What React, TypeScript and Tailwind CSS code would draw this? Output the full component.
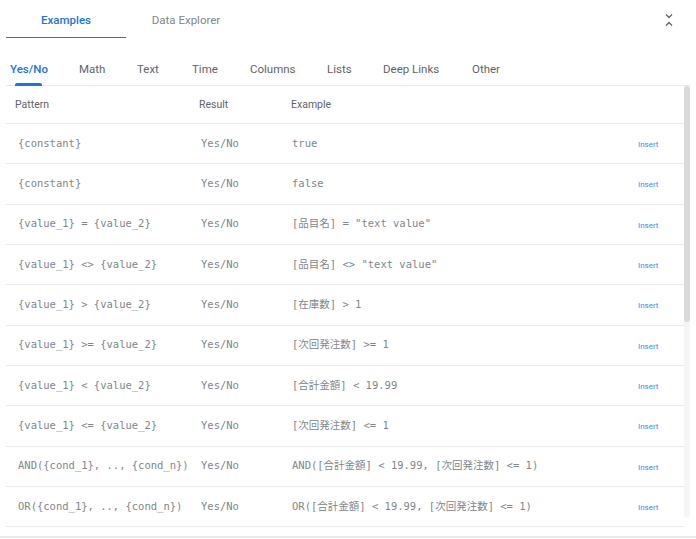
const categories = ['Yes/No', 'Math', 'Text', 'Time', 'Columns', 'Lists', 'Deep Links', 'Other'];
const catX = [10, 79, 137, 192, 250, 327, 383, 472];

const rows: [string, string][] = [
  ['{constant}', 'true'],
  ['{constant}', 'false'],
  ['{value_1} = {value_2}', '[品目名] = "text value"'],
  ['{value_1} <> {value_2}', '[品目名] <> "text value"'],
  ['{value_1} > {value_2}', '[在庫数] > 1'],
  ['{value_1} >= {value_2}', '[次回発注数] >= 1'],
  ['{value_1} < {value_2}', '[合計金額] < 19.99'],
  ['{value_1} <= {value_2}', '[次回発注数] <= 1'],
  ['AND({cond_1}, .., {cond_n})', 'AND([合計金額] < 19.99, [次回発注数] <= 1)'],
  ['OR({cond_1}, .., {cond_n})', 'OR([合計金額] < 19.99, [次回発注数] <= 1)'],
];

const mono = "font-['DejaVu_Sans_Mono','Noto_Sans_CJK_JP',monospace]";

export default function App() {
  return (
    <div className="w-[696px] h-[539px] bg-white overflow-hidden font-['Roboto','Noto_Sans_CJK_JP',sans-serif] text-[#5f6368]">
      {/* top tabs */}
      <div className="flex items-start h-[40px] pl-[6px]">
        <div className="w-[120px] h-[38px] pt-[4px] flex items-center justify-center border-b-[1.5px] border-[#1a73e8] text-[11.5px] text-[#1a73e8] font-medium">
          Examples
        </div>
        <div className="w-[120px] h-[38px] pt-[4px] flex items-center justify-center text-[11.5px] text-[#80868b]">
          Data Explorer
        </div>
        <div className="flex-1" />
        <div className="w-[14px] h-[40px] mr-[20px] flex items-center justify-center">
          <svg width="8" height="14" viewBox="0 0 8 14" fill="none" stroke="#5f6368" strokeWidth="1.3">
            <path d="M1 1.5 L4 4.5 L7 1.5" />
            <path d="M1 12.5 L4 9.5 L7 12.5" />
          </svg>
        </div>
      </div>

      {/* category tabs */}
      <div className="relative h-[46px] ml-[6px] mr-[6px] border-b border-[#e8eaed]">
        {categories.map((c, i) => (
          <div
            key={c}
            className={
              'absolute top-0 h-[46px] flex flex-col items-center justify-end text-[11.5px] ' +
              (i === 0 ? 'text-[#1a73e8] font-medium' : 'text-[#5f6368]')
            }
            style={{ left: catX[i] - 6 }}
          >
            <span>{c}</span>
            {i === 0 ? (
              <div className="mt-[5px] w-[27px] h-[3px] rounded-t-[2px] bg-[#1a73e8]" />
            ) : (
              <div className="mt-[5px] h-[3px]" />
            )}
          </div>
        ))}
      </div>

      {/* table */}
      <div className="flex ml-[6px] h-[441px]">
        <div className="w-[678px] overflow-hidden">
          <div className="flex items-center h-[38px] border-b border-[#e8eaed] text-[10.5px] text-[#5f6368]">
            <div className="w-[184px] pl-[9px]">Pattern</div>
            <div className="w-[92px] pl-[9px]">Result</div>
            <div className="pl-[9px]">Example</div>
          </div>
          {rows.map(([p, e], i) => (
            <div key={i} className="flex items-center h-[40.33px] border-b border-[#e8eaed] text-[10.5px] text-[#80868b]">
              <div className={'w-[183px] pl-[12px] whitespace-pre ' + mono}>{p}</div>
              <div className={'w-[93px] pl-[12px] ' + mono}>Yes/No</div>
              <div className={'flex-1 pl-[10px] whitespace-pre ' + mono}>{e}</div>
              <div className="w-[46px] text-[8px] text-[#4285f4] pt-[3px]">Insert</div>
            </div>
          ))}
        </div>
        <div className="w-[6px] h-[431px] bg-[#f5f5f5] rounded-[3px]">
          <div className="w-[6px] h-[236px] bg-[#dadada] rounded-[3px]" />
        </div>
      </div>
      <div className="mt-[9px] h-[2px] bg-[#e8eaed]" />
    </div>
  );
}
